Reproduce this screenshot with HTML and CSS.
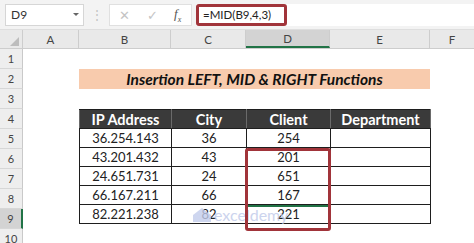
FILE: index.html
```html
<!DOCTYPE html>
<html>

<head>
  <meta charset="UTF-8">
  <title>Insertion LEFT, MID & RIGHT Functions</title>
  <link rel="stylesheet" href="styles.css">
</head>

<body>
  <div class="fbar">
    <div class="namebox"><span>D9</span><span class="caret"></span></div>
    <div class="grip">⋮</div>
    <div class="tools">
      <span class="cancel">✕</span>
      <span class="enter">✓</span>
      <span class="fx">f<sub>x</sub></span>
    </div>
    <div class="formula"><span class="hl">=MID(B9,4,3)</span></div>
  </div>

  <div class="colheads">
    <div class="corner">
      <svg width="9" height="9" viewBox="0 0 9 9"><path d="M9 0 L9 9 L0 9 Z" fill="#bdbdbd"/></svg>
    </div>
    <div class="ch col-a">A</div>
    <div class="ch col-b">B</div>
    <div class="ch col-c">C</div>
    <div class="ch col-d active">D</div>
    <div class="ch col-e">E</div>
    <div class="ch col-f">F</div>
  </div>

  <div class="sheet">
    <div class="rowheads">
      <div class="rh">1</div>
      <div class="rh">2</div>
      <div class="rh">3</div>
      <div class="rh">4</div>
      <div class="rh">5</div>
      <div class="rh">6</div>
      <div class="rh">7</div>
      <div class="rh">8</div>
      <div class="rh active">9</div>
      <div class="rh">10</div>
    </div>

    <div class="cells">
      <div class="blank"></div>
      <div class="title">Insertion LEFT, MID &amp; RIGHT Functions</div>
      <div class="blank"></div>

      <div class="tablewrap">
        <table class="data">
          <tr>
            <th class="w-b">IP Address</th>
            <th class="w-c">City</th>
            <th class="w-d">Client</th>
            <th class="w-e">Department</th>
          </tr>
          <tr><td>36.254.143</td><td>36</td><td>254</td><td></td></tr>
          <tr><td>43.201.432</td><td>43</td><td>201</td><td></td></tr>
          <tr><td>24.651.731</td><td>24</td><td>651</td><td></td></tr>
          <tr><td>66.167.211</td><td>66</td><td>167</td><td></td></tr>
          <tr><td>82.221.238</td><td>82</td><td class="current">221</td><td></td></tr>
        </table>
        <div class="watermark">
          <svg width="20" height="16" viewBox="0 0 20 16"><path d="M1 8 L10 1 L19 8 L19 15 L1 15 Z" fill="#c3cdec"/></svg>
          <span>exceldemy</span>
        </div>
        <div class="redbox"></div>
        <div class="paste">
          <svg width="13" height="9" viewBox="0 0 13 9">
            <rect x="0.5" y="0.5" width="12" height="8" fill="#fff" stroke="#9aa3b5"/>
            <rect x="2" y="2" width="4" height="3" fill="#3b6fc4"/>
            <rect x="7" y="4" width="4" height="3" fill="#8fb0e0"/>
          </svg>
        </div>
      </div>
    </div>
  </div>
</body>

</html>
```

FILE: styles.css
```css
body {
  margin: 0;
  width: 474px;
  height: 243px;
  overflow: hidden;
  background: #fff;
  font-family: Lato, "Open Sans", sans-serif;
  color: #222;
}

/* formula bar */
.fbar {
  display: flex;
  align-items: center;
  height: 30px;
  background: #f3f3f3;
  border-bottom: 1px solid #dedede;
  box-sizing: border-box;
  padding-left: 5px;
}

.namebox {
  display: flex;
  align-items: center;
  justify-content: space-between;
  width: 79px;
  height: 22px;
  box-sizing: border-box;
  background: #fff;
  border: 1px solid #d6d6d6;
  padding: 0 4px 0 5px;
  font-size: 12px;
  color: #333;
}

.caret {
  width: 0;
  height: 0;
  border-left: 3px solid transparent;
  border-right: 3px solid transparent;
  border-top: 3px solid #666;
}

.grip {
  width: 25px;
  text-align: center;
  color: #c2c2c2;
  font-size: 12px;
}

.tools {
  display: flex;
  align-items: center;
  width: 83px;
  height: 22px;
  box-sizing: border-box;
  background: #fff;
  border: 1px solid #e0e0e0;
  font-size: 13px;
}

.cancel {
  color: #c4c4c4;
  margin-left: 9px;
  width: 28px;
}

.enter {
  color: #c4c4c4;
  width: 27px;
}

.fx {
  font-family: "Liberation Serif", serif;
  font-style: italic;
  color: #555;
  font-size: 13px;
}

.fx sub {
  font-size: 8px;
}

.formula {
  flex: 1;
  height: 22px;
  margin-left: 4px;
  background: #fff;
  display: flex;
  align-items: center;
}

.hl {
  display: flex;
  align-items: center;
  height: 22px;
  box-sizing: border-box;
  width: 91px;
  border: 3px solid #a1343a;
  border-radius: 3px;
  padding-left: 4px;
  font-size: 11.5px;
  color: #222;
}

/* column headers */
.colheads {
  display: flex;
  height: 18px;
  background: #e9e9e9;
  border-bottom: 1px solid #cdcdcd;
}

.corner {
  width: 23px;
  display: flex;
  align-items: flex-end;
  justify-content: flex-end;
  padding: 0 3px 2px 0;
  box-sizing: border-box;
  border-right: 1px solid #cdcdcd;
}

.ch {
  box-sizing: border-box;
  border-right: 1px solid #cdcdcd;
  display: flex;
  align-items: center;
  justify-content: center;
  font-size: 11.5px;
  color: #444;
}

.col-a { width: 56px; }
.col-b { width: 92px; }
.col-c { width: 75px; }
.col-d { width: 84px; }
.col-e { width: 100px; }
.col-f { flex: 1; border-right: none; }

.ch.active {
  background: #d3d3d3;
  border-bottom: 2px solid #217346;
}

/* sheet */
.sheet {
  display: flex;
}

.rowheads {
  width: 23px;
  flex-shrink: 0;
}

.rh {
  height: 20px;
  box-sizing: border-box;
  background: #eeeeee;
  border-bottom: 1px solid #d7d7d7;
  border-right: 1px solid #c9c9c9;
  display: flex;
  align-items: center;
  justify-content: center;
  font-size: 11px;
  color: #444;
}

.rh.active {
  background: #d3d3d3;
  border-right: 2px solid #217346;
}

.cells {
  padding-left: 56px;
}

.blank {
  height: 20px;
}

.title {
  width: 351px;
  height: 20px;
  background: #f8cbad;
  display: flex;
  align-items: center;
  justify-content: center;
  font-size: 15.5px;
  font-weight: bold;
  font-style: italic;
  color: #111;
}

.tablewrap {
  position: relative;
}

.data {
  border-collapse: collapse;
  table-layout: fixed;
  width: 351px;
  font-size: 13px;
}

.data th,
.data td {
  height: 19px;
  padding: 0;
  border: 1px solid #1e1e1e;
  text-align: center;
  box-sizing: border-box;
}

.data th {
  background: #3a3a3a;
  color: #fff;
  font-size: 14.5px;
  border-color: #1e1e1e #6a6a6a;
}

.w-b { width: 92px; }
.w-c { width: 75px; }
.w-d { width: 84px; }
.w-e { width: 100px; }

.data td.current {
  box-shadow: inset 0 2px 0 #217346;
}

.redbox {
  position: absolute;
  left: 166px;
  top: 39px;
  width: 86px;
  height: 83px;
  box-sizing: border-box;
  border: 3px solid #a1343a;
  border-radius: 3px;
}

.watermark {
  position: absolute;
  left: 113px;
  top: 96px;
  display: flex;
  align-items: center;
  gap: 2px;
  color: #bfcaea;
  font-size: 16px;
  opacity: 0.8;
}

.paste {
  position: absolute;
  left: 255px;
  top: 127px;
}
```
